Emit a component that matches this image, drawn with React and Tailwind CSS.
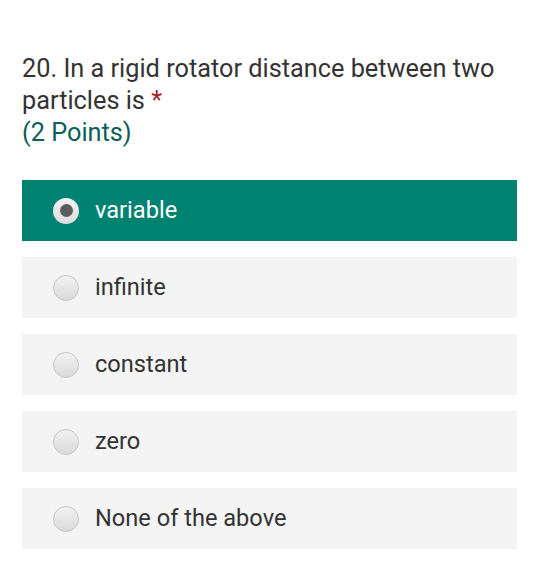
const options = ["variable", "infinite", "constant", "zero", "None of the above"];

function Radio({ checked }) {
  if (checked) {
    return (
      <span className="flex h-[26px] w-[26px] shrink-0 items-center justify-center rounded-full bg-gradient-to-b from-[#f4f4f4] to-[#dcdcdc]">
        <span className="h-[13px] w-[13px] rounded-full bg-[#5f5c5e]" />
      </span>
    );
  }
  return (
    <span className="h-[26px] w-[26px] shrink-0 rounded-full border border-[#c6c6c6] bg-gradient-to-b from-[#f2f2f2] to-[#dadada]" />
  );
}

export default function App() {
  return (
    <div className="min-h-[573px] w-[540px] bg-white px-[22px] pt-[53px] font-['Roboto',sans-serif]">
      <div className="text-[25.3px] leading-[32px] text-[#333333]">
        <div>
          20. In a rigid rotator distance between two particles is{" "}
          <span className="text-[#a4262c]">*</span>
        </div>
        <div className="text-[#0b5e5a]">(2 Points)</div>
      </div>
      <div className="mt-[31px] flex w-[495px] flex-col gap-[16px]">
        {options.map((opt, i) => (
          <div
            key={opt}
            className={
              i === 0
                ? "flex h-[61px] items-center bg-[#008272] pl-[31px] text-white"
                : "flex h-[61px] items-center bg-[#f4f4f4] pl-[31px] text-[#333333]"
            }
          >
            <Radio checked={i === 0} />
            <span className="ml-[16px] text-[23.6px]">{opt}</span>
          </div>
        ))}
      </div>
    </div>
  );
}
